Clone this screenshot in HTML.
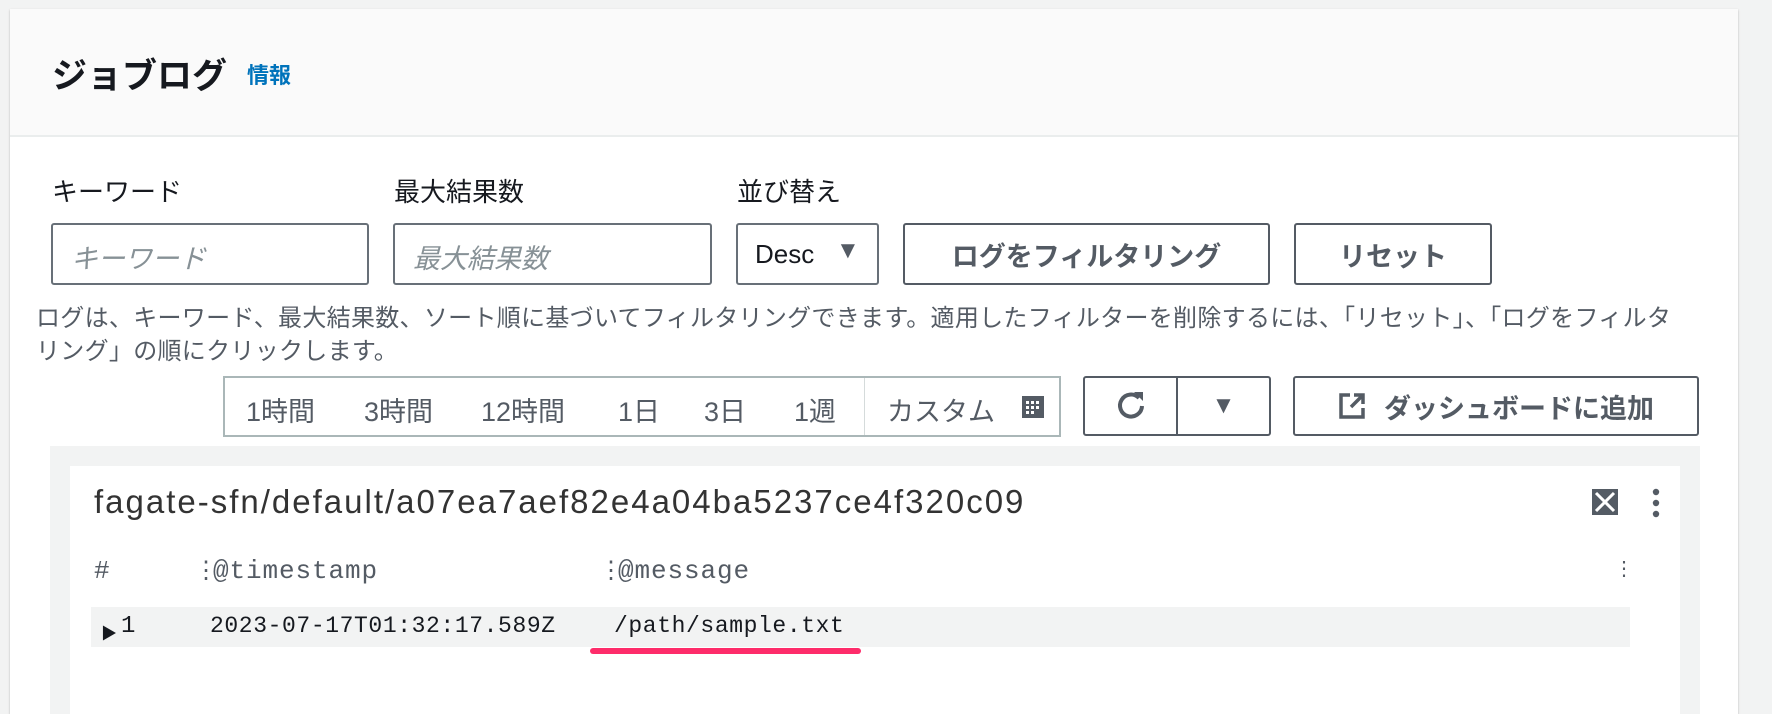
<!DOCTYPE html>
<html><head><meta charset="utf-8"><style>
*{box-sizing:border-box;margin:0;padding:0}
html,body{width:1772px;height:714px;overflow:hidden}
body{background:#f2f3f3;font-family:"Liberation Sans","Noto Sans CJK JP",sans-serif;position:relative;color:#16191f}
.a{position:absolute}
.card{left:10px;top:9px;width:1728px;height:705px;background:#fff;box-shadow:0 1px 2px rgba(0,0,0,.25)}
.hdr{left:10px;top:9px;width:1728px;height:128px;background:#fafafa;border-bottom:2px solid #eaeded}
.lbl{font-size:26px;color:#16191f;top:172px}
.inp{top:223px;height:62px;border:2px solid #687078;border-radius:3px;background:#fff}
.ph{font-size:27px;color:#879196;font-style:italic;position:absolute;left:18px;top:12px}
.btn{top:223px;height:62px;border:2px solid #545b64;border-radius:3px;background:#fff;font-weight:bold;font-size:27px;color:#545b64;display:flex;align-items:center;justify-content:center}
.help{left:36px;font-size:24px;color:#545b64;width:1640px;line-height:33px;top:302px;letter-spacing:0.3px}
.seg{left:223px;top:376px;width:838px;height:61px;border:2px solid #aab7b8;background:#fff}
.seg span{position:absolute;top:12px;font-size:27px;color:#545b64}
.mono{font-family:"Liberation Mono","DejaVu Sans Mono",monospace}
</style></head><body>
<div class="a card"></div>
<div class="a hdr"></div>
<div class="a" style="left:52px;top:48px;font-size:35px;font-weight:bold">ジョブログ</div>
<div class="a" style="left:247px;top:58px;font-size:22px;font-weight:bold;color:#0073bb">情報</div>

<div class="a lbl" style="left:52px">キーワード</div>
<div class="a lbl" style="left:394px">最大結果数</div>
<div class="a lbl" style="left:737px">並び替え</div>
<div class="a inp" style="left:51px;width:318px"><span class="ph">キーワード</span></div>
<div class="a inp" style="left:393px;width:319px"><span class="ph">最大結果数</span></div>
<div class="a inp" style="left:736px;width:143px"><span style="position:absolute;left:17px;top:14px;font-size:26px;color:#16191f">Desc</span><span style="position:absolute;left:98px;top:12px;font-size:24px;color:#545b64">▼</span></div>
<div class="a btn" style="left:903px;width:367px">ログをフィルタリング</div>
<div class="a btn" style="left:1294px;width:198px">リセット</div>
<div class="a help">ログは、キーワード、最大結果数、ソート順に基づいてフィルタリングできます。適用したフィルターを削除するには、「リセット」、「ログをフィルタリング」の順にクリックします。</div>

<div class="a seg">
<span style="left:21px">1時間</span><span style="left:139px">3時間</span><span style="left:256px">12時間</span><span style="left:393px">1日</span><span style="left:479px">3日</span><span style="left:569px">1週</span>
<div style="position:absolute;left:639px;top:0;width:1px;height:57px;background:#d5dbdb"></div>
<span style="left:662px">カスタム</span>
<svg style="position:absolute;left:795px;top:16px" width="26" height="26" viewBox="0 0 26 26"><rect x="2" y="2" width="22" height="22" fill="#545b64"/><g fill="#fff"><rect x="6" y="7" width="3" height="3"/><rect x="11" y="7" width="3" height="3"/><rect x="16" y="7" width="3" height="3"/><rect x="6" y="12" width="3" height="3"/><rect x="11" y="12" width="3" height="3"/><rect x="16" y="12" width="3" height="3"/><rect x="6" y="17" width="3" height="3"/><rect x="11" y="17" width="3" height="3"/></g></svg>
</div>
<div class="a btn" style="left:1083px;top:376px;height:60px;width:95px;border-radius:3px 0 0 3px"><svg width="34" height="34" viewBox="0 0 34 34"><path d="M25 9A11 11 0 1 0 28 17" fill="none" stroke="#545b64" stroke-width="4"/><path d="M20 3L29 3L29 12Z" fill="#545b64"/></svg></div>
<div class="a btn" style="left:1176px;top:376px;height:60px;width:95px;border-radius:0 3px 3px 0;font-size:24px">▼</div>
<div class="a btn" style="left:1293px;top:376px;height:60px;width:406px"><svg width="28" height="28" viewBox="0 0 28 28" style="margin-right:18px"><path d="M12 3H3V25H25V16" fill="none" stroke="#545b64" stroke-width="3.5"/><path d="M16 3H25V12M25 3L13 15" fill="none" stroke="#545b64" stroke-width="3.5"/></svg>ダッシュボードに追加</div>

<div class="a" style="left:50px;top:446px;width:1650px;height:268px;background:#f2f3f3"></div>
<div class="a" style="left:70px;top:466px;width:1610px;height:248px;background:#fff"></div>
<div class="a" style="left:94px;top:483px;font-size:33px;color:#333;letter-spacing:2.0px">fagate-sfn/default/a07ea7aef82e4a04ba5237ce4f320c09</div>
<svg class="a" style="left:1591px;top:488px" width="28" height="28" viewBox="0 0 28 28"><rect x="1" y="1" width="26" height="26" fill="#545b64"/><path d="M5 5L23 23M23 5L5 23" stroke="#fff" stroke-width="3"/></svg>
<svg class="a" style="left:1650px;top:488px" width="12" height="30" viewBox="0 0 12 30"><circle cx="6" cy="4" r="3.2" fill="#545b64"/><circle cx="6" cy="15" r="3.2" fill="#545b64"/><circle cx="6" cy="26" r="3.2" fill="#545b64"/></svg>

<div class="a mono" style="left:94px;top:556px;font-size:26px;color:#545b64">#</div>
<div class="a mono" style="left:194px;top:556px;font-size:24px;color:#545b64">⋮</div>
<div class="a mono" style="left:213px;top:556px;font-size:26px;color:#545b64;letter-spacing:0.9px">@timestamp</div>
<div class="a mono" style="left:599px;top:556px;font-size:24px;color:#545b64">⋮</div>
<div class="a mono" style="left:618px;top:556px;font-size:26px;color:#545b64;letter-spacing:0.9px">@message</div>
<div class="a mono" style="left:1614px;top:556px;font-size:20px;color:#545b64">⋮</div>

<div class="a" style="left:91px;top:607px;width:1539px;height:40px;background:#f2f3f3"></div>
<div class="a" style="left:101px;top:620px;font-size:16px;color:#16191f">▶</div>
<div class="a mono" style="left:121px;top:613px;font-size:24px;color:#16191f">1</div>
<div class="a mono" style="left:210px;top:613px;font-size:23px;color:#16191f;letter-spacing:0.6px">2023-07-17T01:32:17.589Z</div>
<div class="a mono" style="left:614px;top:613px;font-size:23px;color:#16191f;letter-spacing:0.6px">/path/sample.txt</div>
<div class="a" style="left:590px;top:648px;width:271px;height:6px;border-radius:3px;background:#fe2c6a"></div>
</body></html>
